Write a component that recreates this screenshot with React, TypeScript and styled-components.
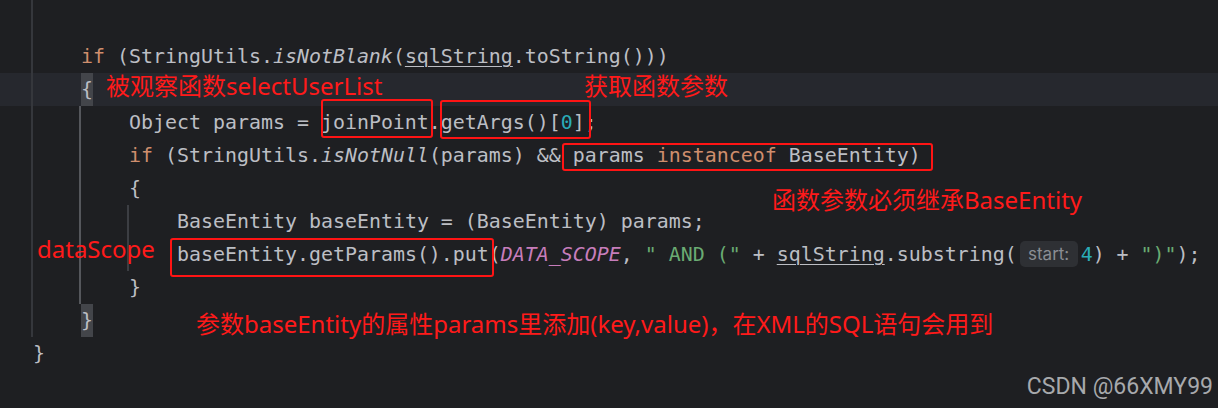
import React from "react";
import styled, { createGlobalStyle } from "styled-components";

const Global = createGlobalStyle`
  html, body { margin: 0; padding: 0; background: #1e1f22; }
  body { width: 1218px; height: 408px; overflow: hidden; }
`;

const Screen = styled.div`
  position: relative;
  width: 1218px;
  height: 408px;
  background: #1e1f22;
  overflow: hidden;
`;

const Editor = styled.div`
  display: flex;
  flex-direction: column;
  font-family: "DejaVu Sans Mono", "Liberation Mono", monospace;
  font-size: 19.93px;
  color: #bcbec4;
`;

const Line = styled.div<{ $current?: boolean; $h?: number }>`
  display: flex;
  align-items: stretch;
  height: ${(p) => p.$h ?? 33}px;
  line-height: 33px;
  padding-left: 31px;
  white-space: pre;
  background: ${(p) => (p.$current ? "#26282e" : "transparent")};
`;

const Indent = styled.span<{ $guide?: string }>`
  flex: none;
  width: 48px;
  box-sizing: border-box;
  border-left: 2px solid ${(p) => p.$guide ?? "transparent"};
`;

const Code = styled.span`
  margin-left: 2px;
  white-space: pre;
`;

const Kw = styled.span`
  color: #cf8e6d;
`;
const Num = styled.span`
  color: #2aacb8;
`;
const Str = styled.span`
  color: #6aab73;
`;
const Const = styled.span`
  color: #c77dbb;
  font-style: italic;
`;
const Static = styled.span`
  font-style: italic;
`;
const Field = styled.span`
  text-decoration: underline;
  text-underline-offset: 3px;
  text-decoration-thickness: 1px;
`;

const Brace = styled.span`
  display: inline-block;
  height: 33px;
  background: #43454a;
`;

const Mark = styled.span<{ $t: number; $r: number; $b: number; $l: number }>`
  position: relative;
  display: inline-block;
  height: 33px;
  &::after {
    content: "";
    position: absolute;
    top: ${(p) => p.$t}px;
    right: ${(p) => p.$r}px;
    bottom: ${(p) => p.$b}px;
    left: ${(p) => p.$l}px;
    border: 2px solid #ff1414;
    border-radius: 3px;
    pointer-events: none;
  }
`;

const Inlay = styled.span`
  display: inline-block;
  vertical-align: top;
  margin: 3px 3px 0 3px;
  height: 26px;
  line-height: 26px;
  width: 58px;
  box-sizing: border-box;
  text-align: center;
  border-radius: 5px;
  background: #2e3034;
  color: #8a8d93;
  font-family: Inter, "Noto Sans", sans-serif;
  font-size: 17px;
`;

const Note = styled.div<{ $x: number; $y: number }>`
  position: absolute;
  left: ${(p) => p.$x}px;
  top: ${(p) => p.$y}px;
  font-family: "Noto Sans", "Noto Sans CJK SC", sans-serif;
  font-size: 24px;
  line-height: 24px;
  color: #ff1a1a;
  white-space: nowrap;
`;

const Watermark = styled.div`
  position: absolute;
  right: 5px;
  bottom: 10px;
  font-family: Roboto, "Liberation Sans", sans-serif;
  font-size: 23px;
  line-height: 23px;
  color: #a7a9ac;
  white-space: nowrap;
`;

const G0 = "#35373c";
const G1 = "#55575c";
const G2 = "#3c3e43";

type Row = {
  guides: string[];
  h?: number;
  current?: boolean;
  code?: React.ReactNode;
};

const rows: Row[] = [
  { guides: [G0], h: 40 },
  {
    guides: [G0],
    code: (
      <>
        <Kw>if</Kw> (StringUtils.<Static>isNotBlank</Static>(<Field>sqlString</Field>.toString()))
      </>
    ),
  },
  { guides: [G0], current: true, code: <Brace>{"{"}</Brace> },
  {
    guides: [G0, G1],
    code: (
      <>
        {"Object params = "}
        <Mark $t={-7} $r={-4} $b={1} $l={0}>joinPoint</Mark>.
        <Mark $t={-6} $r={-6} $b={0} $l={-1}>
          getArgs()[<Num>0</Num>]
        </Mark>
        ;
      </>
    ),
  },
  {
    guides: [G0, G1],
    code: (
      <>
        <Kw>if</Kw> (StringUtils.<Static>isNotNull</Static>(params) &amp;&amp;{" "}
        <Mark $t={4} $r={-12} $b={1} $l={-11}>
          params <Kw>instanceof</Kw> BaseEntity)
        </Mark>
      </>
    ),
  },
  { guides: [G0, G1], code: "{" },
  { guides: [G0, G1, G2], code: "BaseEntity baseEntity = (BaseEntity) params;" },
  {
    guides: [G0, G1, G2],
    code: (
      <>
        <Mark $t={0} $r={-5} $b={-6} $l={-7}>baseEntity.getParams().put</Mark>(
        <Const>DATA_SCOPE</Const>, <Str>{'" AND ("'}</Str> + <Field>sqlString</Field>.substring(
        <Inlay>start:</Inlay>
        <Num>4</Num>) + <Str>{'")"'}</Str>);
      </>
    ),
  },
  { guides: [G0, G1], code: "}" },
  { guides: [G0], code: <Brace>{"}"}</Brace> },
  { guides: [], code: "}" },
];

export default function App() {
  return (
    <Screen>
      <Global />
      <Editor>
        {rows.map((r, i) => (
          <Line key={i} $current={r.current} $h={r.h}>
            {r.guides.map((g, j) => (
              <Indent key={j} $guide={g} />
            ))}
            {r.code !== undefined && <Code>{r.code}</Code>}
          </Line>
        ))}
      </Editor>
      <Note $x={106} $y={74}>被观察函数selectUserList</Note>
      <Note $x={584} $y={74}>获取函数参数</Note>
      <Note $x={772} $y={188}>函数参数必须继承BaseEntity</Note>
      <Note $x={37} $y={237}>dataScope</Note>
      <Note $x={196} $y={312}>参数baseEntity的属性params里添加(key,value)，在XML的SQL语句会用到</Note>
      <Watermark>CSDN @66XMY99</Watermark>
    </Screen>
  );
}
